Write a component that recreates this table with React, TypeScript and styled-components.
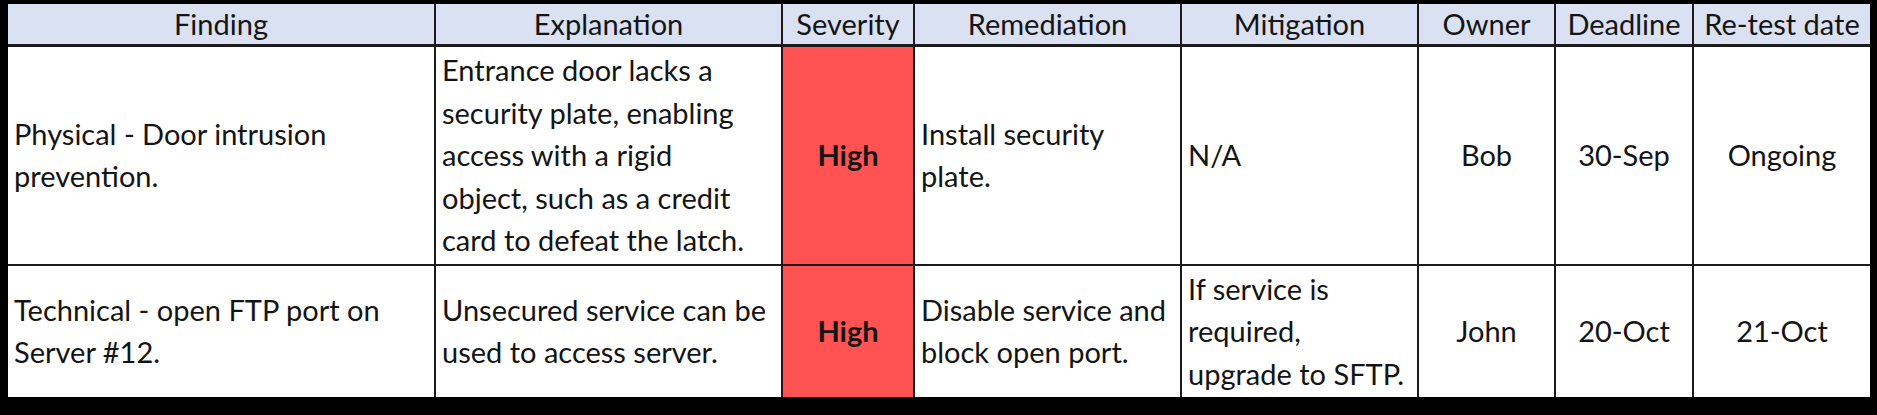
import React from "react";
import styled, { createGlobalStyle } from "styled-components";

const GlobalStyle = createGlobalStyle`
  html, body {
    margin: 0;
    padding: 0;
    background: #000;
  }
  body {
    font-family: Lato, "Open Sans", sans-serif;
  }
`;

const Frame = styled.div`
  width: 1877px;
  height: 415px;
  box-sizing: border-box;
  padding: 4px 7px 0 8px;
  background: #000;
`;

const Table = styled.table`
  width: 1862px;
  table-layout: fixed;
  border-collapse: collapse;
  background: #fff;
  color: #141414;
  font-family: Lato, "Open Sans", sans-serif;
  font-size: 29px;
`;

const HeaderCell = styled.th`
  height: 40px;
  padding: 0 2px;
  background: #d9e1f2;
  font-weight: 400;
  text-align: center;
  white-space: nowrap;
  line-height: 40px;
  border-left: 2px solid #1c1c1c;
  border-bottom: 3px solid #1c1c1c;
  &:first-child {
    border-left: none;
  }
`;

const Cell = styled.td<{ $align?: "left" | "center"; $severity?: boolean }>`
  padding: 2px 6px;
  vertical-align: middle;
  line-height: 42.5px;
  text-align: ${(p) => p.$align ?? "left"};
  font-weight: ${(p) => (p.$severity ? 700 : 400)};
  background: ${(p) => (p.$severity ? "#ff5353" : "#fff")};
  border-left: 2px solid #1c1c1c;
  border-top: 2px solid #1c1c1c;
  &:first-child {
    border-left: none;
  }
`;

const Line = styled.span`
  display: block;
  white-space: nowrap;
`;

const columns = [
  { title: "Finding", width: 427 },
  { title: "Explanation", width: 347 },
  { title: "Severity", width: 132 },
  { title: "Remediation", width: 267 },
  { title: "Mitigation", width: 237 },
  { title: "Owner", width: 137 },
  { title: "Deadline", width: 138 },
  { title: "Re-test date", width: 177 },
];

interface Finding {
  finding: string[];
  explanation: string[];
  severity: string;
  remediation: string[];
  mitigation: string[];
  owner: string;
  deadline: string;
  retest: string;
}

const findings: Finding[] = [
  {
    finding: ["Physical - Door intrusion", "prevention."],
    explanation: [
      "Entrance door lacks a",
      "security plate, enabling",
      "access with a rigid",
      "object, such as a credit",
      "card to defeat the latch.",
    ],
    severity: "High",
    remediation: ["Install security", "plate."],
    mitigation: ["N/A"],
    owner: "Bob",
    deadline: "30-Sep",
    retest: "Ongoing",
  },
  {
    finding: ["Technical - open FTP port on", "Server #12."],
    explanation: ["Unsecured service can be", "used to access server."],
    severity: "High",
    remediation: ["Disable service and", "block open port."],
    mitigation: ["If service is", "required,", "upgrade to SFTP."],
    owner: "John",
    deadline: "20-Oct",
    retest: "21-Oct",
  },
];

const Lines = ({ lines }: { lines: string[] }) => (
  <>
    {lines.map((l, i) => (
      <Line key={i}>{l}</Line>
    ))}
  </>
);

export default function App() {
  return (
    <>
      <GlobalStyle />
      <Frame>
        <Table>
          <colgroup>
            {columns.map((c) => (
              <col key={c.title} style={{ width: c.width }} />
            ))}
          </colgroup>
          <thead>
            <tr>
              {columns.map((c) => (
                <HeaderCell key={c.title}>{c.title}</HeaderCell>
              ))}
            </tr>
          </thead>
          <tbody>
            {findings.map((f, i) => (
              <tr key={i}>
                <Cell>
                  <Lines lines={f.finding} />
                </Cell>
                <Cell>
                  <Lines lines={f.explanation} />
                </Cell>
                <Cell $align="center" $severity>
                  {f.severity}
                </Cell>
                <Cell>
                  <Lines lines={f.remediation} />
                </Cell>
                <Cell>
                  <Lines lines={f.mitigation} />
                </Cell>
                <Cell $align="center">{f.owner}</Cell>
                <Cell $align="center">{f.deadline}</Cell>
                <Cell $align="center">{f.retest}</Cell>
              </tr>
            ))}
          </tbody>
        </Table>
      </Frame>
    </>
  );
}
